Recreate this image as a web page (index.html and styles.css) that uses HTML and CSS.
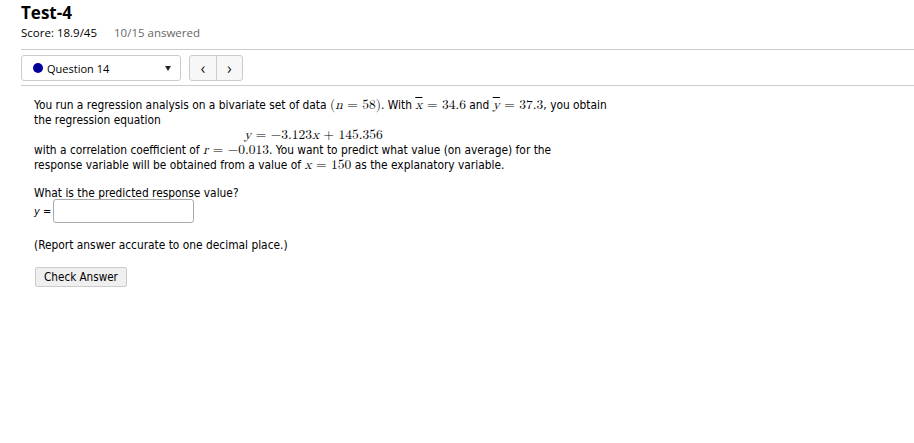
FILE: index.html
```html
<!DOCTYPE html>
<html>
<head>
<meta charset="utf-8">
<link rel="stylesheet" href="styles.css">
</head>
<body>
<header class="top">
  <h1 class="title">Test-4</h1>
  <div class="score"><span>Score: 18.9/45</span><span class="answered">10/15 answered</span></div>
</header>
<nav class="navbar">
  <div class="qselect">
    <span class="dot"></span><span class="qlabel">Question 14</span><span class="caret"></span>
  </div>
  <div class="arrows">
    <button class="arrow">&lsaquo;</button><button class="arrow">&rsaquo;</button>
  </div>
</nav>
<main class="question">
  <p class="para">You run a regression analysis on a bivariate set of data <span class="m">(<i>n</i> = 58)</span>. With <span class="m"><i class="bar">x</i> = 34.6</span> and <span class="m"><i class="bar">y</i> = 37.3</span>, you obtain<br>the regression equation</p>
  <div class="display"><span class="m"><i>y</i> = &minus;3.123<i>x</i> + 145.356</span></div>
  <p class="para">with a correlation coefficient of <span class="m"><i>r</i> = &minus;0.013</span>. You want to predict what value (on average) for the<br>response variable will be obtained from a value of <span class="m"><i>x</i> = 150</span> as the explanatory variable.</p>
  <p class="ask">What is the predicted response value?</p>
  <div class="answer"><label class="ylab"><i>y</i> =</label><input class="box" type="text"></div>
  <p class="note">(Report answer accurate to one decimal place.)</p>
  <button class="check">Check Answer</button>
</main>
</body>
</html>
```
FILE: styles.css
```css
html, body { margin: 0; padding: 0; background: #fff; }
body { font-family: "DejaVu Sans Condensed", "DejaVu Sans", Verdana, sans-serif; font-stretch: condensed; color: #000; }
.top { padding: 2px 0 0 21px; font-family: "Open Sans", "Noto Sans", sans-serif; font-stretch: normal; }
.title { margin: 0; font-size: 17px; font-weight: 700; line-height: 22px; }
.score { font-size: 11.5px; line-height: 16px; margin-top: 1px; display: flex; gap: 17px; }
.answered { color: #666; }
.navbar { margin: 8px 0 0 21px; border-top: 1px solid #ccc; border-bottom: 1px solid #ccc; padding: 5px 0 4px; display: flex; gap: 8px; align-items: center; font-family: "Open Sans", "Noto Sans", sans-serif; font-stretch: normal; }
.qselect { height: 24px; border: 1px solid #ccc; border-radius: 3px; display: flex; align-items: center; padding-left: 11px; width: 147px; }
.dot { width: 10px; height: 10px; border-radius: 50%; background: #000099; }
.qlabel { font-size: 11px; margin-left: 4px; flex: 1; }
.caret { width: 0; height: 0; border-left: 3.5px solid transparent; border-right: 3.5px solid transparent; border-top: 5px solid #222; margin-right: 9px; }
.arrows { display: flex; border: 1px solid #ccc; border-radius: 3px; background: #f7f7f7; height: 26px; box-sizing: border-box; }
.arrow { width: 26px; border: 0; background: transparent; font-size: 16px; padding: 0; line-height: 1; font-family: "Open Sans", sans-serif; color: #222; }
.arrow + .arrow { border-left: 1px solid #ccc; }
.question { padding: 12px 0 0 34px; width: 600px; font-size: 11.85px; line-height: 15px; }
.para { margin: 0; }
.m { font-family: "Latin Modern Math", "DejaVu Serif", "Liberation Serif", serif; font-stretch: normal; font-size: 13.5px; line-height: 12px; }
.m i { font-style: italic; }
.bar { text-decoration: overline; }
.display { text-align: center; margin: 0; padding-right: 20px; width: 559px; line-height: 15px; }
.ask { margin: 13px 0 0; }
.answer { display: flex; align-items: center; gap: 2px; margin-top: -2px; }
.ylab { font-size: 11px; }
.box { width: 141px; height: 24px; box-sizing: border-box; border: 1px solid #aaa; border-radius: 3px; margin: 0; }
.note { margin: 15px 0 0; }
.check { margin-top: 14px; margin-left: 1px; font-family: "DejaVu Sans Condensed", "DejaVu Sans", sans-serif; font-stretch: condensed; font-size: 11.6px; height: 20px; width: 92px; padding: 0; background: #efefef; border: 1px solid #ccc; border-radius: 2px; color: #000; }
```
